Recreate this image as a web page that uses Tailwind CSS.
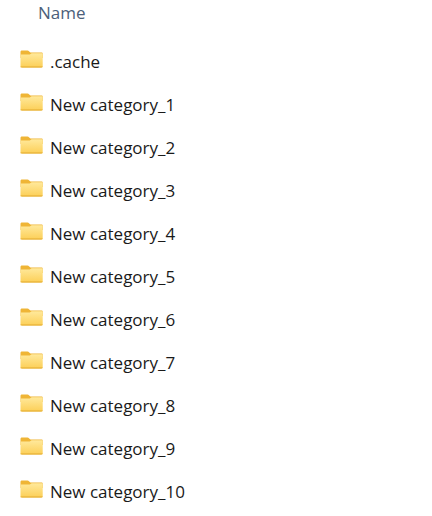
<!DOCTYPE html>
<html>
<head>
    <title>Folder list</title>
    <script src="https://cdn.jsdelivr.net/npm/@tailwindcss/browser@4"></script>
</head>
<body class="bg-white overflow-hidden font-['Open_Sans',sans-serif]">
    <svg class="absolute w-0 h-0">
        <defs>
            <linearGradient id="folderFront" x1="0" y1="0" x2="0" y2="1">
                <stop offset="0" stop-color="#ffe99c"/>
                <stop offset="1" stop-color="#fccf57"/>
            </linearGradient>
            <symbol id="folder" viewBox="0 0 23 18">
                <path d="M0.5 2C0.5 1 1 0.5 2 0.5H7.5C8.2 0.5 8.6 0.8 9.2 1.4L10.5 2.6H21.5C22.3 2.6 22.7 3 22.7 3.8V8H0.5Z" fill="#efb536"/>
                <path d="M0.5 4.6H8.8C9.6 4.6 10 4.3 10.5 3.9L11.6 3.2H21.6C22.3 3.2 22.7 3.6 22.7 4.3V16.2C22.7 17 22.3 17.4 21.5 17.4H1.7C0.9 17.4 0.5 17 0.5 16.2Z" fill="url(#folderFront)"/>
                <path d="M0.5 16.6H22.7V16.2C22.7 17 22.3 17.4 21.5 17.4H1.7C0.9 17.4 0.5 17 0.5 16.2Z" fill="#e2a92f"/>
            </symbol>
        </defs>
    </svg>

    <div class="h-[40px] pl-[38px] pt-[1px] text-[17px] leading-[24px] text-[#4c607a]">Name</div>

    <ul class="text-[17px] text-[#1a1a1a]">
        <li class="flex items-center gap-[7px] h-[43px] pl-[20px]"><svg class="w-[23px] h-[18px] -mt-[5px]"><use href="#folder"/></svg><span class="mt-[1px]">.cache</span></li>
        <li class="flex items-center gap-[7px] h-[43px] pl-[20px]"><svg class="w-[23px] h-[18px] -mt-[5px]"><use href="#folder"/></svg><span class="mt-[1px]">New category_1</span></li>
        <li class="flex items-center gap-[7px] h-[43px] pl-[20px]"><svg class="w-[23px] h-[18px] -mt-[5px]"><use href="#folder"/></svg><span class="mt-[1px]">New category_2</span></li>
        <li class="flex items-center gap-[7px] h-[43px] pl-[20px]"><svg class="w-[23px] h-[18px] -mt-[5px]"><use href="#folder"/></svg><span class="mt-[1px]">New category_3</span></li>
        <li class="flex items-center gap-[7px] h-[43px] pl-[20px]"><svg class="w-[23px] h-[18px] -mt-[5px]"><use href="#folder"/></svg><span class="mt-[1px]">New category_4</span></li>
        <li class="flex items-center gap-[7px] h-[43px] pl-[20px]"><svg class="w-[23px] h-[18px] -mt-[5px]"><use href="#folder"/></svg><span class="mt-[1px]">New category_5</span></li>
        <li class="flex items-center gap-[7px] h-[43px] pl-[20px]"><svg class="w-[23px] h-[18px] -mt-[5px]"><use href="#folder"/></svg><span class="mt-[1px]">New category_6</span></li>
        <li class="flex items-center gap-[7px] h-[43px] pl-[20px]"><svg class="w-[23px] h-[18px] -mt-[5px]"><use href="#folder"/></svg><span class="mt-[1px]">New category_7</span></li>
        <li class="flex items-center gap-[7px] h-[43px] pl-[20px]"><svg class="w-[23px] h-[18px] -mt-[5px]"><use href="#folder"/></svg><span class="mt-[1px]">New category_8</span></li>
        <li class="flex items-center gap-[7px] h-[43px] pl-[20px]"><svg class="w-[23px] h-[18px] -mt-[5px]"><use href="#folder"/></svg><span class="mt-[1px]">New category_9</span></li>
        <li class="flex items-center gap-[7px] h-[43px] pl-[20px]"><svg class="w-[23px] h-[18px] -mt-[5px]"><use href="#folder"/></svg><span class="mt-[1px]">New category_10</span></li>
    </ul>
</body>
</html>
